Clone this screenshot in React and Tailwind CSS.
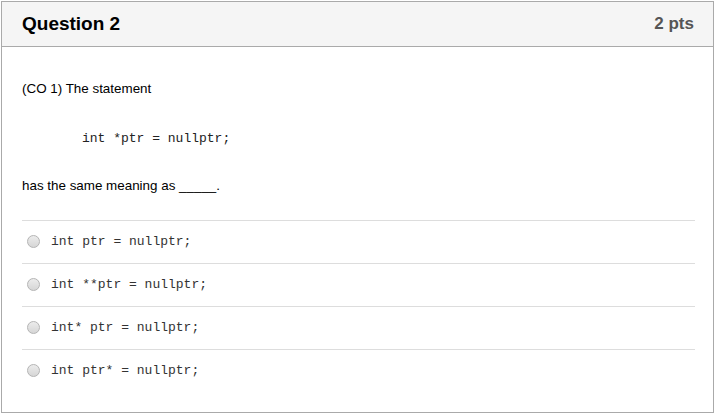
import React from 'react';

const options = [
  'int ptr = nullptr;',
  'int **ptr = nullptr;',
  'int* ptr = nullptr;',
  'int ptr* = nullptr;',
];

const sans = "font-['Liberation_Sans',Arial,sans-serif]";
const mono = "font-['Liberation_Mono','Courier_New',monospace]";

const Radio = () => (
  <span className="inline-block w-[13px] h-[13px] -mt-[1px] rounded-full border border-[#b4b4b4] bg-gradient-to-b from-[#ececec] to-[#d6d6d6] shrink-0" />
);

const App = () => {
  return (
    <div className={`bg-white w-[716px] h-[415px] pt-px pl-px ${sans}`}>
      <div className="w-[713px] h-[412px] border border-[#aaaaaa] flex flex-col">
        {/* header */}
        <div className="h-[45px] bg-[#f5f5f5] border-b border-[#aaaaaa] flex items-center justify-between pl-5 pr-[19px]">
          <h2 className="text-[19px] font-bold text-black leading-none -mt-[1px]">Question 2</h2>
          <span className="text-[17px] font-bold text-[#555555] leading-none -mt-[1px]">2 pts</span>
        </div>

        {/* body */}
        <div className="pl-5 pr-[18px] pt-[32px] text-[13.4px] text-black">
          <p className="leading-5 h-5">(CO 1) The statement</p>
          <p className={`${mono} leading-5 h-5 mt-[30px] pl-[60px] text-[13px] text-[#222222]`}>int *ptr = nullptr;</p>
          <p className="leading-5 h-5 mt-[27px]">has the same meaning as _____.</p>

          <div className="mt-[24px]">
            {options.map((opt) => (
              <div key={opt} className="border-t border-[#dddddd] h-[43px] flex items-center pl-[5px] pb-[1px]">
                <Radio />
                <span className={`${mono} text-[13px] text-[#333333] ml-[11px] leading-5`}>{opt}</span>
              </div>
            ))}
          </div>
        </div>
      </div>
    </div>
  );
};

export default App;
